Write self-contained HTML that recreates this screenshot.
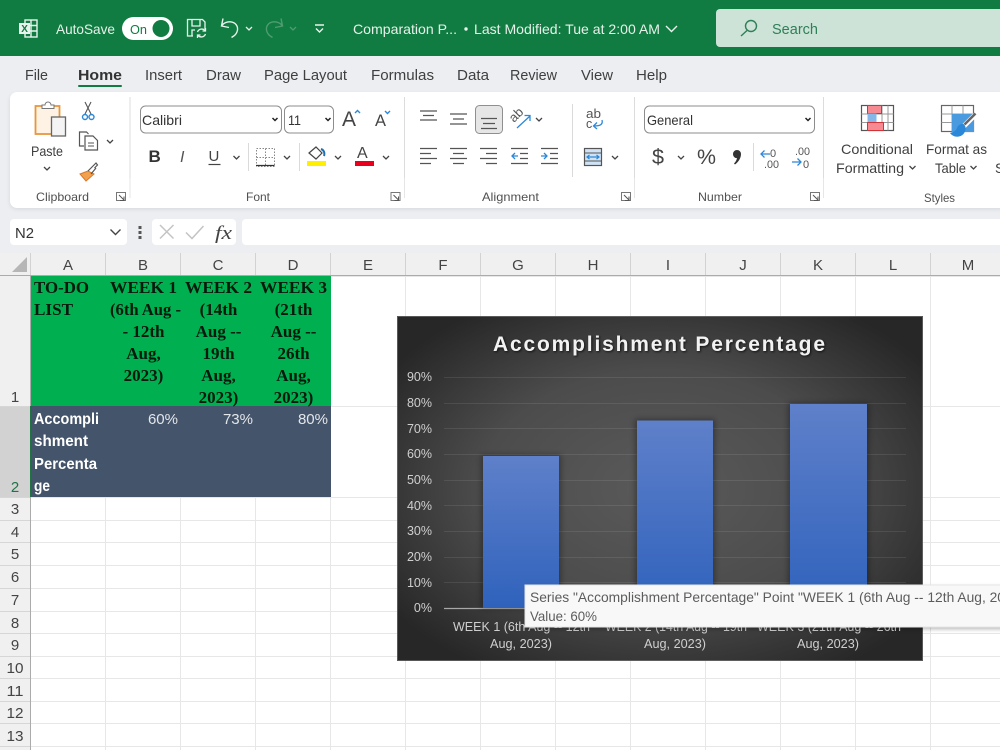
<!DOCTYPE html>
<html><head><meta charset="utf-8"><title>Excel</title>
<style>
html,body{margin:0;padding:0;width:1000px;height:750px;overflow:hidden;background:#fff}
svg{display:block}
text{font-family:"Liberation Sans",sans-serif}
.t{font-size:14px;fill:#3f3f3f}
.w{font-size:14px;fill:#e6f1ea}
.g{font-size:12px;fill:#505050}
.h{font-size:15px;fill:#444;text-anchor:middle}
.r{font-size:15px;fill:#444;text-anchor:middle}
.s{font-family:"Liberation Serif",serif;font-weight:bold;font-size:17px;fill:#041a0c;text-anchor:middle}
.s2{font-family:"Liberation Serif",serif;font-weight:bold;font-size:17px;fill:#041a0c}
.c{font-size:15.5px;fill:#fff;font-weight:bold}
.p{font-size:15px;fill:#e3e6ea;text-anchor:end}
.y{font-size:12.5px;fill:#cfcfcf;text-anchor:end}
.x{font-size:12.5px;fill:#cfcfcf}
.ln{stroke:#555;stroke-width:1.3;fill:none}
.ch{stroke:#444;stroke-width:1.3;fill:none}
.gl{stroke:#e7e7e7;stroke-width:1}
.cl{stroke:#fff;stroke-opacity:.09;stroke-width:1}
</style></head><body>
<svg width="1000" height="750" viewBox="0 0 1000 750" xmlns="http://www.w3.org/2000/svg">
<defs>
<radialGradient id="cg" cx="50%" cy="50%" r="62%"><stop offset="0" stop-color="#5a5a5a"/><stop offset=".55" stop-color="#4c4c4c"/><stop offset="1" stop-color="#272727"/></radialGradient>
<linearGradient id="bar" x1="0" y1="0" x2="0" y2="1"><stop offset="0" stop-color="#5f80ca"/><stop offset="1" stop-color="#2f62bc"/></linearGradient>
<filter id="sh" x="-20%" y="-20%" width="140%" height="140%"><feGaussianBlur stdDeviation="3"/></filter>
<filter id="sb" x="-5%" y="-20%" width="110%" height="140%"><feGaussianBlur stdDeviation="2"/></filter>
<filter id="ts" x="-5%" y="-20%" width="110%" height="140%"><feGaussianBlur stdDeviation="1"/></filter>
</defs>

<!-- base -->
<rect width="1000" height="750" fill="#fff"/>
<rect y="56" width="1000" height="197" fill="#eceef2"/>

<!-- title bar -->
<rect width="1000" height="56" fill="#107c41"/>
<g fill="none" stroke="#e9f3ed" stroke-width="1.4">
<rect x="25" y="20" width="12" height="17"/>
<path d="M25 25.500h12M25 31h12M31 20v17"/>
</g>
<rect x="19" y="23" width="11" height="11" fill="#e9f3ed"/>
<text x="21.200" y="32" font-size="10" font-weight="bold" fill="#107c41">X</text>
<text class="w" x="56" y="34" textLength="59" lengthAdjust="spacingAndGlyphs">AutoSave</text>
<rect x="122" y="17" width="51" height="23" rx="11.500" fill="#fff"/>
<circle cx="161" cy="28.500" r="8.500" fill="#107c41"/>
<text x="130" y="34" font-size="13" fill="#107c41" textLength="17" lengthAdjust="spacingAndGlyphs">On</text>
<g fill="none" stroke="#e9f3ed" stroke-width="1.3">
<path d="M193 36h-5.500v-16.500h15l2.500 2.500v7"/>
<path d="M192 20v6h8v-6"/>
<path d="M192 36v-6h3"/>
<path d="M197.500 32a4.500 4.500 0 0 1 7.500-1.500M205.500 34a4.500 4.500 0 0 1-7.500 1.500"/>
<path d="M205.500 28v3h-3M197.500 38v-3h3"/>
</g>
<path d="M223 18.500l-1.500 7.500 7.500 1.500M221.500 26c3-4.500 9.500-5.500 13.500-2.500 4 3.500 3 8.500-.5 12l-3 2" fill="none" stroke="#e9f3ed" stroke-width="1.4"/>
<path d="M246 27l3 3 3-3" fill="none" stroke="#e9f3ed" stroke-width="1.3"/>
<path d="M281 18.500l1.500 7.500-7.500 1.500M282.500 26c-3-4.500-9.500-5.500-13.500-2.500-4 3.500-3 8.500.5 12l3 2" fill="none" stroke="#4f9c72" stroke-width="1.4"/>
<path d="M290 27l3 3 3-3" fill="none" stroke="#4f9c72" stroke-width="1.3"/>
<path d="M315 25h9M316 28.500l3.500 3.500 3.500-3.500" fill="none" stroke="#e9f3ed" stroke-width="1.4"/>
<text class="w" x="353" y="34" textLength="104" lengthAdjust="spacingAndGlyphs">Comparation P...</text>
<circle cx="466" cy="29" r="1.700" fill="#e9f3ed"/>
<text class="w" x="474" y="34" textLength="186" lengthAdjust="spacingAndGlyphs">Last Modified: Tue at 2:00 AM</text>
<path d="M666 26l5.500 5.500 5.500-5.500" fill="none" stroke="#e9f3ed" stroke-width="1.4"/>
<path d="M1000 9H720a4 4 0 0 0-4 4v30a4 4 0 0 0 4 4h280z" fill="#cde3d7"/>
<circle cx="751" cy="26" r="5.500" fill="none" stroke="#2f7f57" stroke-width="1.4"/>
<path d="M747 30.500l-6 5.500" stroke="#2f7f57" stroke-width="1.4"/>
<text x="772" y="34" font-size="14.500" fill="#2f7f57" textLength="46" lengthAdjust="spacingAndGlyphs">Search</text>

<!-- tabs -->
<g>
<text class="t" style="font-size:15px" x="25" y="80" textLength="23" lengthAdjust="spacingAndGlyphs">File</text>
<text class="t" style="font-size:15px;font-weight:bold;fill:#333" x="78" y="80" textLength="44" lengthAdjust="spacingAndGlyphs">Home</text>
<text class="t" style="font-size:15px" x="145" y="80" textLength="37" lengthAdjust="spacingAndGlyphs">Insert</text>
<text class="t" style="font-size:15px" x="206" y="80" textLength="35" lengthAdjust="spacingAndGlyphs">Draw</text>
<text class="t" style="font-size:15px" x="264" y="80" textLength="83" lengthAdjust="spacingAndGlyphs">Page Layout</text>
<text class="t" style="font-size:15px" x="371" y="80" textLength="63" lengthAdjust="spacingAndGlyphs">Formulas</text>
<text class="t" style="font-size:15px" x="457" y="80" textLength="32" lengthAdjust="spacingAndGlyphs">Data</text>
<text class="t" style="font-size:15px" x="510" y="80" textLength="47" lengthAdjust="spacingAndGlyphs">Review</text>
<text class="t" style="font-size:15px" x="581" y="80" textLength="32" lengthAdjust="spacingAndGlyphs">View</text>
<text class="t" style="font-size:15px" x="636" y="80" textLength="31" lengthAdjust="spacingAndGlyphs">Help</text>
</g>
<rect x="78" y="85" width="44" height="2" rx="1" fill="#107c41"/>

<!-- ribbon -->
<rect x="10" y="94" width="1000" height="115" rx="7" fill="#c9ccd0" filter="url(#sb)" opacity=".7"/>
<rect x="10" y="92" width="1000" height="116" rx="7" fill="#fff"/>
<path d="M130 97v81M404.500 97v81M634.500 97v81M823.500 97v81" stroke="#dcdcdc" fill="none"/>
<path d="M130 178v20M404.500 178v20M634.500 178v20M823.500 178v20" stroke="#e6e6e6" fill="none"/>

<!-- clipboard -->
<rect x="35.500" y="106" width="24" height="28" fill="#fdf2e4" stroke="#e8963c" stroke-width="1.800"/>
<path d="M42 107v-2h3a3 3 0 0 1 6 0h3v3.500H42z" fill="#fff" stroke="#777" stroke-width="1"/>
<rect x="51.500" y="117" width="14" height="19" fill="#f4f4f4" stroke="#666" stroke-width="1.300"/>
<text class="t" style="font-size:14px" x="31" y="156" textLength="32" lengthAdjust="spacingAndGlyphs">Paste</text>
<path class="ch" d="M44 167l3 3 3-3"/>
<path d="M85 102l6 12M91 102l-6 12" stroke="#555" stroke-width="1.100" fill="none"/>
<circle cx="85" cy="117" r="2.500" fill="none" stroke="#2b88d8" stroke-width="1.400"/>
<circle cx="91.500" cy="117" r="2.500" fill="none" stroke="#2b88d8" stroke-width="1.400"/>
<path d="M84 146h-4.500v-14h7l2 2" fill="none" stroke="#555" stroke-width="1.200"/>
<path d="M85 136h8l4.500 4.500V150H85z" fill="#fff" stroke="#555" stroke-width="1.200"/>
<path d="M88 143h6M88 146h6" stroke="#555"/>
<path class="ch" d="M107 140l3 3 3-3"/>
<path d="M88 171l-8 3 6 7 8-7z" fill="#f2a24e" stroke="#d9782b" stroke-width="1"/>
<path d="M88 171l5-5M91 174l5-6M93 166l3-3 1.500 2-3 3" stroke="#555" stroke-width="1.200" fill="none"/>
<text class="g" x="36" y="201" textLength="53" lengthAdjust="spacingAndGlyphs">Clipboard</text>
<g id="launch" fill="none" stroke="#555" stroke-width="1"><path d="M116.500 200.500v-8h9v8z" stroke="#777"/><path d="M119 195l5 5M124 196.500v4h-4"/></g>
<use href="#launch" x="274.500"/>
<use href="#launch" x="505"/>
<use href="#launch" x="694"/>

<!-- font -->
<rect x="140.500" y="106" width="141" height="27" rx="5" fill="#fff" stroke="#8d8d8d"/>
<text x="142" y="125" font-size="14" fill="#333" textLength="40" lengthAdjust="spacingAndGlyphs">Calibri</text>
<path d="M272.500 118l2.500 2.500 2.500-2.500" fill="none" stroke="#222" stroke-width="1.500"/>
<rect x="284.500" y="106" width="49" height="27" rx="5" fill="#fff" stroke="#8d8d8d"/>
<text x="288" y="125" font-size="14" fill="#333" textLength="13" lengthAdjust="spacingAndGlyphs">11</text>
<path d="M325.500 118l2.500 2.500 2.500-2.500" fill="none" stroke="#222" stroke-width="1.500"/>
<text x="342" y="126" font-size="21" fill="#444" textLength="14" lengthAdjust="spacingAndGlyphs">A</text>
<path d="M355 113l2.500-2.500 2.500 2.500" fill="none" stroke="#2b88d8" stroke-width="1.400"/>
<text x="375" y="126" font-size="17" fill="#444" textLength="11" lengthAdjust="spacingAndGlyphs">A</text>
<path d="M385 111l2.500 2.500 2.500-2.500" fill="none" stroke="#2b88d8" stroke-width="1.400"/>
<text x="148.500" y="162" font-size="17" font-weight="bold" fill="#333">B</text>
<text x="180" y="162" font-size="16" font-style="italic" fill="#555">I</text>
<text x="208.500" y="161" font-size="15" fill="#444">U</text>
<path d="M208.500 164.500h12" stroke="#444" stroke-width="1.200"/>
<path class="ch" d="M233.500 156l3 3 3-3"/>
<path d="M248.500 143v28M299.500 143v28M753.500 143v28" stroke="#dadada"/>
<path d="M256.500 148.500h18v18h-18zM265.500 148.500v18M256.500 157.500h18" fill="none" stroke="#888" stroke-dasharray="1.500 1.500"/>
<path d="M256 165.500h18.500" stroke="#333" stroke-width="1.300"/>
<path class="ch" d="M284 156l3 3 3-3"/>
<path d="M309 153l7-6 6 6-6 6z" fill="#fff" stroke="#444" stroke-width="1.200"/>
<path d="M321 149c3 1 4 4 3 7" fill="none" stroke="#1f6fb5" stroke-width="2"/>
<rect x="307" y="161" width="19" height="5" fill="#ffef00"/>
<path class="ch" d="M335 156l3 3 3-3"/>
<text x="357" y="158" font-size="16" fill="#444">A</text>
<rect x="355" y="161" width="19" height="5" fill="#e8001c"/>
<path class="ch" d="M383 156l3 3 3-3"/>
<text class="g" x="246" y="201" textLength="24" lengthAdjust="spacingAndGlyphs">Font</text>

<!-- alignment -->
<path class="ln" d="M420 111h17M423 115.500h11M420 120h17"/>
<path class="ln" d="M450 114h17M453 119h11M450 124h17"/>
<rect x="475.500" y="105.500" width="27" height="28" rx="4" fill="#e6e6e6" stroke="#8f8f8f"/>
<path class="ln" d="M481 118.500h16M483 123.500h12M481 128.500h16"/>
<text x="0" y="0" font-size="13" fill="#555" transform="translate(514 123) rotate(-45)">ab</text>
<path d="M517 128l13-12M524.500 115.500h5.500v5.500" fill="none" stroke="#2b88d8" stroke-width="1.300"/>
<path class="ch" d="M536 118l3 3 3-3"/>
<path class="ln" d="M420 148.500h17M420 153.500h11M420 158.500h17M420 163.500h11"/>
<path class="ln" d="M450 148.500h17M453 153.500h11M450 158.500h17M453 163.500h11"/>
<path class="ln" d="M480 148.500h17M486 153.500h11M480 158.500h17M486 163.500h11"/>
<path class="ln" d="M511 148.500h17M520 153.500h8M520 158.500h8M511 163.500h17"/>
<path d="M518 156h-6M515 153l-3 3 3 3" fill="none" stroke="#2b88d8" stroke-width="1.300"/>
<path class="ln" d="M541 148.500h17M550 153.500h8M550 158.500h8M541 163.500h17"/>
<path d="M541 156h6M544 153l3 3-3 3" fill="none" stroke="#2b88d8" stroke-width="1.300"/>
<path d="M572.500 104v73" stroke="#dadada"/>
<text x="586" y="118" font-size="12.500" fill="#555" textLength="15" lengthAdjust="spacingAndGlyphs">ab</text>
<text x="586" y="128" font-size="12.500" fill="#555">c</text>
<path d="M602 120c1 4-1 6-8 6M597 122.500l-3.500 3.500 3.500 3" fill="none" stroke="#2b88d8" stroke-width="1.300"/>
<rect x="584.500" y="148.500" width="17" height="17" fill="#cfe3f5" stroke="#555" stroke-width="1.200"/>
<path d="M584.500 153h17M584.500 161h17" stroke="#555"/>
<path d="M587 157h12M589.500 155l-2.500 2 2.500 2M596.500 155l2.500 2-2.500 2" fill="none" stroke="#2b88d8" stroke-width="1.200"/>
<path class="ch" d="M612 156l3 3 3-3"/>
<text class="g" x="482" y="201" textLength="57" lengthAdjust="spacingAndGlyphs">Alignment</text>

<!-- number -->
<rect x="644.500" y="106" width="170" height="27" rx="5" fill="#fff" stroke="#8d8d8d"/>
<text x="647" y="125" font-size="14" fill="#333" textLength="46" lengthAdjust="spacingAndGlyphs">General</text>
<path d="M805.500 118l2.500 2.500 2.500-2.500" fill="none" stroke="#222" stroke-width="1.500"/>
<text x="652" y="164" font-size="21" fill="#444" textLength="12" lengthAdjust="spacingAndGlyphs">$</text>
<path class="ch" d="M678 156l3 3 3-3"/>
<text x="697" y="164" font-size="21" fill="#444" textLength="19" lengthAdjust="spacingAndGlyphs">%</text>
<path d="M733 154a4 4 0 1 1 8 0c0 4-2.500 8-6 10.500l-1-1c1.500-1.500 2.500-3 3-5.500-2 .5-4-1.500-4-4z" fill="#333"/>
<text x="770" y="157" font-size="11" fill="#555">0</text>
<text x="764" y="168" font-size="11" fill="#555" textLength="15" lengthAdjust="spacingAndGlyphs">.00</text>
<path d="M770 154h-9M764.500 150.500l-3.500 3.500 3.500 3.500" fill="none" stroke="#2b88d8" stroke-width="1.300"/>
<text x="795" y="155" font-size="11" fill="#555" textLength="15" lengthAdjust="spacingAndGlyphs">.00</text>
<text x="803" y="168" font-size="11" fill="#555">0</text>
<path d="M792 162h9M797.500 158.500l3.500 3.500-3.500 3.500" fill="none" stroke="#2b88d8" stroke-width="1.300"/>
<text class="g" x="698" y="201" textLength="44" lengthAdjust="spacingAndGlyphs">Number</text>

<!-- styles -->
<rect x="861.500" y="105.500" width="32" height="25" fill="#fff" stroke="#555" stroke-width="1.200"/>
<path d="M861.500 114h32M861.500 122.500h32M868 105.500v25M882 105.500v25M888 105.500v25" stroke="#999" fill="none"/>
<rect x="867.500" y="105.500" width="14" height="8" fill="#f58a92" stroke="#d13438"/>
<rect x="867.500" y="113.500" width="9" height="9" fill="#85b8e8"/>
<rect x="867.500" y="122.500" width="16" height="8" fill="#f58a92" stroke="#d13438"/>
<rect x="941.500" y="105.500" width="32" height="26" fill="#fff" stroke="#666" stroke-width="1.200"/>
<path d="M941.500 114h32M941.500 122.500h32M952 105.500v26M963 105.500v26" stroke="#999" fill="none"/>
<rect x="952" y="114" width="22" height="18" fill="#4a9ae0"/>
<path d="M975 115l-12 12" stroke="#fff" stroke-width="5"/>
<path d="M975.500 113.500l-11 11" stroke="#666" stroke-width="2.600"/>
<path d="M963.500 124c-3.500-.5-5.500 1.500-6.500 4-1 2.500-3 4-7 5 3.500 5 10.500 4.500 13.500 1 2-2.500 3-6.500 1-9z" fill="#2b88d8"/>
<text class="t" style="font-size:14px" x="841" y="154" textLength="72" lengthAdjust="spacingAndGlyphs">Conditional</text>
<text class="t" style="font-size:14px" x="836" y="173" textLength="68" lengthAdjust="spacingAndGlyphs">Formatting</text>
<path class="ch" d="M909.500 166l3 3 3-3"/>
<text class="t" style="font-size:14px" x="926" y="154" textLength="61" lengthAdjust="spacingAndGlyphs">Format as</text>
<text class="t" style="font-size:14px" x="935" y="173" textLength="31" lengthAdjust="spacingAndGlyphs">Table</text>
<path class="ch" d="M970.500 166l3 3 3-3"/>
<text class="t" style="font-size:14px" x="995" y="173">S</text>
<text class="g" x="924" y="202" textLength="31" lengthAdjust="spacingAndGlyphs">Styles</text>

<!-- formula bar -->
<rect x="10" y="219" width="117" height="26" rx="4" fill="#fff"/>
<text x="15" y="238" font-size="14.500" fill="#333" textLength="19" lengthAdjust="spacingAndGlyphs">N2</text>
<path d="M110.500 229.500l5 5 5-5" fill="none" stroke="#444" stroke-width="1.400"/>
<g fill="#555"><rect x="138.500" y="226" width="3" height="3"/><rect x="138.500" y="231" width="3" height="3"/><rect x="138.500" y="236" width="3" height="3"/></g>
<rect x="152" y="219" width="84" height="26" rx="4" fill="#fff"/>
<path d="M160 225l13.500 13.500M173.500 225L160 238.500" stroke="#c4c4c4" stroke-width="1.500" fill="none"/>
<path d="M186 232.500l6 6 11.500-12.500" stroke="#c4c4c4" stroke-width="1.500" fill="none"/>
<text x="215" y="239" font-size="19" font-style="italic" fill="#444" style="font-family:'Liberation Serif',serif" textLength="17" lengthAdjust="spacingAndGlyphs">fx</text>
<path d="M1000 219H246a4 4 0 0 0-4 4v18a4 4 0 0 0 4 4h754z" fill="#fff"/>

<!-- sheet -->
<rect y="253" width="1000" height="497" fill="#fff"/>
<rect y="253" width="1000" height="23" fill="#f0f0f0"/>
<rect y="276" width="31" height="474" fill="#f0f0f0"/>
<rect y="406" width="31" height="91" fill="#d2d2d2"/>
<path d="M27 257v15H12z" fill="#b6b6b6"/>
<path class="gl" d="M31 276.500H1000M31 406.500H1000M31 497.500H1000M31 520.500H1000M31 542.500H1000M31 565.500H1000M31 588.500H1000M31 611.500H1000M31 633.500H1000M31 656.500H1000M31 678.500H1000M31 701.500H1000M31 723.500H1000M31 746.500H1000"/>
<path class="gl" d="M105.500 276V750M180.500 276V750M255.500 276V750M330.500 276V750M405.500 276V750M480.500 276V750M555.500 276V750M630.500 276V750M705.500 276V750M780.500 276V750M855.500 276V750M930.500 276V750"/>
<path stroke="#d2d2d2" d="M30.500 253V276M105.500 253V276M180.500 253V276M255.500 253V276M330.500 253V276M405.500 253V276M480.500 253V276M555.500 253V276M630.500 253V276M705.500 253V276M780.500 253V276M855.500 253V276M930.500 253V276"/>
<path d="M0 275.500H1000" stroke="#ababab"/>
<path d="M30.500 276V750" stroke="#ababab"/>
<path d="M30.500 406V497" stroke="#217346"/>
<path stroke="#d6d6d6" d="M0 406.500H30M0 497.500H30M0 520.500H30M0 542.500H30M0 565.500H30M0 588.500H30M0 611.500H30M0 633.500H30M0 656.500H30M0 678.500H30M0 701.500H30M0 723.500H30M0 746.500H30"/>
<text class="h" x="68" y="270">A</text><text class="h" x="143" y="270">B</text><text class="h" x="218" y="270">C</text><text class="h" x="293" y="270">D</text><text class="h" x="368" y="270">E</text><text class="h" x="443" y="270">F</text><text class="h" x="518" y="270">G</text><text class="h" x="593" y="270">H</text><text class="h" x="668" y="270">I</text><text class="h" x="743" y="270">J</text><text class="h" x="818" y="270">K</text><text class="h" x="893" y="270">L</text><text class="h" x="968" y="270">M</text>
<text class="r" x="15" y="402">1</text>
<text class="r" x="15" y="492" style="fill:#217346">2</text>
<text class="r" x="15" y="514">3</text><text class="r" x="15" y="537">4</text><text class="r" x="15" y="559">5</text><text class="r" x="15" y="582">6</text><text class="r" x="15" y="605">7</text><text class="r" x="15" y="628">8</text><text class="r" x="15" y="650">9</text><text class="r" x="15" y="673" textLength="17" lengthAdjust="spacingAndGlyphs">10</text><text class="r" x="15" y="696" textLength="17" lengthAdjust="spacingAndGlyphs">11</text><text class="r" x="15" y="718" textLength="17" lengthAdjust="spacingAndGlyphs">12</text><text class="r" x="15" y="741" textLength="17" lengthAdjust="spacingAndGlyphs">13</text>

<rect x="31" y="276" width="300" height="130" fill="#00b050"/>
<rect x="31" y="406" width="300" height="91" fill="#44546a"/>
<text class="s2" x="34" y="293" textLength="55" lengthAdjust="spacingAndGlyphs">TO-DO</text>
<text class="s2" x="34" y="315" textLength="39" lengthAdjust="spacingAndGlyphs">LIST</text>
<text class="s" x="143.500" y="293" textLength="67" lengthAdjust="spacingAndGlyphs">WEEK 1</text>
<text class="s2" x="110" y="315" textLength="71" lengthAdjust="spacingAndGlyphs">(6th Aug -</text>
<text class="s" x="143.500" y="337">- 12th</text>
<text class="s" x="143.500" y="359">Aug,</text>
<text class="s" x="143.500" y="381">2023)</text>
<text class="s" x="218.500" y="293" textLength="67" lengthAdjust="spacingAndGlyphs">WEEK 2</text>
<text class="s" x="218.500" y="315">(14th</text>
<text class="s" x="218.500" y="337">Aug --</text>
<text class="s" x="218.500" y="359">19th</text>
<text class="s" x="218.500" y="381">Aug,</text>
<text class="s" x="218.500" y="403">2023)</text>
<text class="s" x="293.500" y="293" textLength="67" lengthAdjust="spacingAndGlyphs">WEEK 3</text>
<text class="s" x="293.500" y="315">(21th</text>
<text class="s" x="293.500" y="337">Aug --</text>
<text class="s" x="293.500" y="359">26th</text>
<text class="s" x="293.500" y="381">Aug,</text>
<text class="s" x="293.500" y="403">2023)</text>
<text class="c" x="34" y="424" textLength="65" lengthAdjust="spacingAndGlyphs">Accompli</text>
<text class="c" x="34" y="446" textLength="54" lengthAdjust="spacingAndGlyphs">shment</text>
<text class="c" x="34" y="469" textLength="63" lengthAdjust="spacingAndGlyphs">Percenta</text>
<text class="c" x="34" y="491" textLength="16" lengthAdjust="spacingAndGlyphs">ge</text>
<text class="p" x="178" y="424">60%</text>
<text class="p" x="253" y="424">73%</text>
<text class="p" x="328" y="424">80%</text>

<!-- chart -->
<rect x="397" y="316" width="526" height="345" fill="url(#cg)"/>
<rect x="397.500" y="316.500" width="525" height="344" fill="none" stroke="#8a8a8a" stroke-opacity=".5"/>
<text x="494" y="352" font-size="21" font-weight="bold" fill="#000" opacity=".7" filter="url(#ts)" textLength="332" lengthAdjust="spacing">Accomplishment Percentage</text>
<text x="493" y="351" font-size="21" font-weight="bold" fill="#f2f2f2" textLength="332" lengthAdjust="spacing">Accomplishment Percentage</text>
<path class="cl" d="M444 377.500H906M444 403.500H906M444 428.500H906M444 454.500H906M444 480.500H906M444 505.500H906M444 531.500H906M444 557.500H906M444 582.500H906"/>
<path d="M444 608.500H906" stroke="#a8a8a8" stroke-width="1.200"/>
<text class="y" x="432" y="381">90%</text><text class="y" x="432" y="407">80%</text><text class="y" x="432" y="433">70%</text><text class="y" x="432" y="458">60%</text><text class="y" x="432" y="484">50%</text><text class="y" x="432" y="510">40%</text><text class="y" x="432" y="535">30%</text><text class="y" x="432" y="561">20%</text><text class="y" x="432" y="587">10%</text><text class="y" x="432" y="612">0%</text>
<g filter="url(#sh)" fill="#000" opacity=".32">
<rect x="481" y="455" width="80" height="153"/><rect x="635" y="419" width="80" height="189"/><rect x="788" y="403" width="81" height="205"/>
</g>
<rect x="483" y="456" width="76" height="152" fill="url(#bar)"/>
<rect x="637" y="420.500" width="76" height="187.500" fill="url(#bar)"/>
<rect x="790" y="404" width="77" height="204" fill="url(#bar)"/>
<text class="x" x="453" y="631" textLength="137" lengthAdjust="spacingAndGlyphs">WEEK 1 (6th Aug -- 12th</text>
<text class="x" x="605" y="631" textLength="142" lengthAdjust="spacingAndGlyphs">WEEK 2 (14th Aug -- 19th</text>
<text class="x" x="757" y="631" textLength="144" lengthAdjust="spacingAndGlyphs">WEEK 3 (21th Aug -- 26th</text>
<text class="x" x="490" y="648" textLength="62" lengthAdjust="spacingAndGlyphs">Aug, 2023)</text>
<text class="x" x="644" y="648" textLength="62" lengthAdjust="spacingAndGlyphs">Aug, 2023)</text>
<text class="x" x="797" y="648" textLength="62" lengthAdjust="spacingAndGlyphs">Aug, 2023)</text>

<!-- tooltip -->
<rect x="527" y="587" width="480" height="42" fill="#000" opacity=".3" filter="url(#sb)"/>
<rect x="525" y="585" width="480" height="42" fill="#f8f8f8" stroke="#e6e6e6"/>
<text x="530" y="602" font-size="14" fill="#5c5c5c" textLength="475" lengthAdjust="spacingAndGlyphs">Series "Accomplishment Percentage" Point "WEEK 1 (6th Aug -- 12th Aug, 20</text>
<text x="530" y="621" font-size="14" fill="#5c5c5c" textLength="67" lengthAdjust="spacingAndGlyphs">Value: 60%</text>
</svg>
</body></html>
